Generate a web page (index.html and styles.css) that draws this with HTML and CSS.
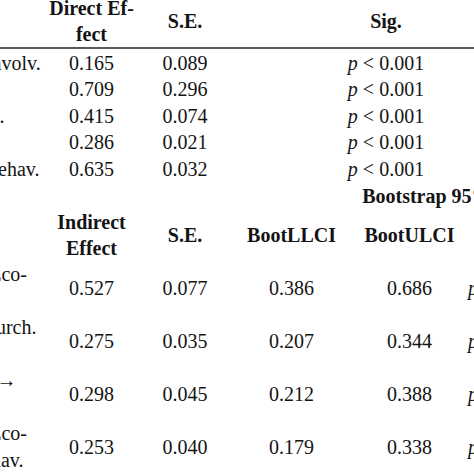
FILE: index.html
```html
<!DOCTYPE html>
<html lang="en">
<head>
<meta charset="utf-8">
<title>Mediation effects</title>
<link rel="stylesheet" href="styles.css">
</head>
<body>
<div class="table">
  <div class="row head2">
    <div class="lbl">Path</div>
    <div class="c">Direct Ef-<br>fect</div>
    <div class="c">S.E.</div>
    <div class="c span3">Sig.</div>
  </div>
  <div class="rule"></div>
  <div class="row one">
    <div class="lbl">Concern → Involv.</div>
    <div class="c">0.165</div>
    <div class="c">0.089</div>
    <div class="c span3"><i>p</i> &lt; 0.001</div>
  </div>
  <div class="row one">
    <div class="lbl">Env. → Trust</div>
    <div class="c">0.709</div>
    <div class="c">0.296</div>
    <div class="c span3"><i>p</i> &lt; 0.001</div>
  </div>
  <div class="row one">
    <div class="lbl">Env. → Purch.</div>
    <div class="c">0.415</div>
    <div class="c">0.074</div>
    <div class="c span3"><i>p</i> &lt; 0.001</div>
  </div>
  <div class="row one">
    <div class="lbl">Adv. → Trust</div>
    <div class="c">0.286</div>
    <div class="c">0.021</div>
    <div class="c span3"><i>p</i> &lt; 0.001</div>
  </div>
  <div class="row one">
    <div class="lbl">Concern → Behav.</div>
    <div class="c">0.635</div>
    <div class="c">0.032</div>
    <div class="c span3"><i>p</i> &lt; 0.001</div>
  </div>

  <div class="row one boot">
    <div class="c boot-title">Bootstrap 95% CI</div>
  </div>
  <div class="row head2">
    <div class="lbl">Path</div>
    <div class="c">Indirect<br>Effect</div>
    <div class="c">S.E.</div>
    <div class="c">BootLLCI</div>
    <div class="c">BootULCI</div>
    <div class="c">Sig.</div>
  </div>
  <div class="row two">
    <div class="lbl">Intention → Eco-<br>label Purch.</div>
    <div class="c">0.527</div>
    <div class="c">0.077</div>
    <div class="c">0.386</div>
    <div class="c">0.686</div>
    <div class="c"><i>p</i> &lt; 0.001</div>
  </div>
  <div class="row two">
    <div class="lbl">Concern → Purch.<br>→ Behav.</div>
    <div class="c">0.275</div>
    <div class="c">0.035</div>
    <div class="c">0.207</div>
    <div class="c">0.344</div>
    <div class="c"><i>p</i> &lt; 0.001</div>
  </div>
  <div class="row two">
    <div class="lbl">Environment →<br>Involv.</div>
    <div class="c">0.298</div>
    <div class="c">0.045</div>
    <div class="c">0.212</div>
    <div class="c">0.388</div>
    <div class="c"><i>p</i> &lt; 0.001</div>
  </div>
  <div class="row two">
    <div class="lbl">Intention → Eco-<br>Shopping Behav.</div>
    <div class="c">0.253</div>
    <div class="c">0.040</div>
    <div class="c">0.179</div>
    <div class="c">0.338</div>
    <div class="c"><i>p</i> &lt; 0.001</div>
  </div>
</div>
</body>
</html>
```

FILE: styles.css
```css
html, body {
  margin: 0;
  padding: 0;
  background: #ffffff;
  overflow: hidden;
}

body {
  width: 474px;
  height: 474px;
  font-family: "Liberation Serif", "Times New Roman", serif;
  font-size: 20px;
  color: #141414;
}

.table {
  width: 653px;
  margin-left: -113px;
  margin-top: -5px;
}

.row {
  display: grid;
  grid-template-columns: 158px 93px 94px 119px 117px 72px;
  align-items: center;
}

.row.head2 {
  font-weight: bold;
  line-height: 26px;
  height: 52px;
}

.row.one {
  line-height: 26.4px;
  height: 26.4px;
}

.row.two {
  line-height: 26.5px;
  height: 53px;
}

.lbl {
  text-align: left;
  white-space: nowrap;
}

.c {
  text-align: center;
  white-space: nowrap;
}

.span3 {
  grid-column: 4 / 7;
}

.rule {
  height: 2px;
  background: #5a5a5a;
  margin-bottom: 1px;
}

.row.boot {
  margin-top: 1px;
  font-weight: bold;
}

.boot-title {
  grid-column: 5 / 7;
  padding-right: 10px;
}
```
